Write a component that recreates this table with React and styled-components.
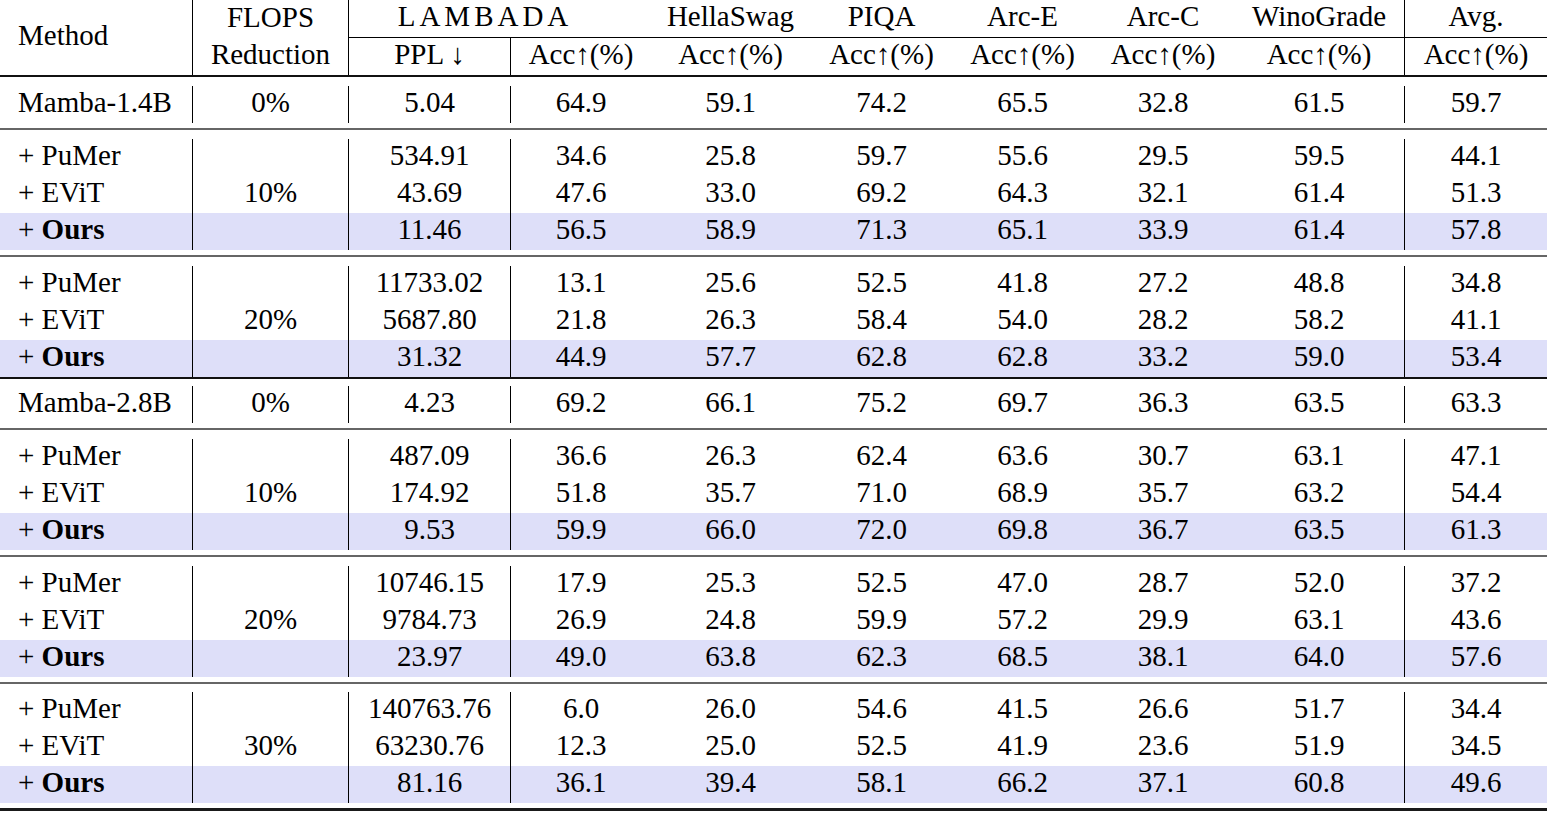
import React from "react";
import styled, { createGlobalStyle } from "styled-components";

const GlobalStyle = createGlobalStyle`
  html, body {
    margin: 0;
    padding: 0;
    background: #ffffff;
  }
  body {
    font-family: "Liberation Serif", "Times New Roman", serif;
    color: #000;
  }
`;

// fixed column widths, taken from the layout of the table
const COLS = "192px 156px 162px 141px 159px 143px 139px 142px 170px 143px";
// columns that carry a vertical rule on their left edge
const RULED = [1, 2, 3, 9];

const Table = styled.div`
  width: 1547px;
  font-size: 29px;
`;

const Header = styled.div`
  display: grid;
  grid-template-columns: ${COLS};
  grid-template-rows: 38px 37px;
  border-bottom: 2px solid #111;
`;

const HeadCell = styled.div`
  grid-column: ${(p) => p.$col};
  grid-row: ${(p) => p.$row};
  box-sizing: border-box;
  display: flex;
  align-items: center;
  justify-content: ${(p) => (p.$left ? "flex-start" : "center")};
  padding: 0 ${(p) => p.$shift || 0}px 4px ${(p) => (p.$left ? 18 : 0)}px;
  line-height: 33px;
  letter-spacing: ${(p) => p.$spread || 0}px;
  white-space: nowrap;
  border-left: ${(p) => (p.$rule ? "1px solid #000" : "none")};
  border-bottom: ${(p) => (p.$underline ? "1px solid #000" : "none")};
`;

const Group = styled.div`
  padding: ${(p) => p.$top}px 0 ${(p) => p.$bottom}px;
  border-bottom: ${(p) => p.$rule};
`;

const Row = styled.div`
  display: grid;
  grid-template-columns: ${COLS};
  height: 37px;
  background: ${(p) => (p.$ours ? "#dedff9" : "transparent")};
`;

const Cell = styled.div`
  box-sizing: border-box;
  display: flex;
  align-items: center;
  justify-content: ${(p) => (p.$left ? "flex-start" : "center")};
  padding: 0 0 4px ${(p) => (p.$left ? 18 : 0)}px;
  line-height: 33px;
  white-space: nowrap;
  border-left: ${(p) => (p.$rule ? "1px solid #000" : "none")};
`;

const Strong = styled.span`
  font-weight: 700;
`;

const LIGHT = "2px solid #666";
const HEAVY = "2px solid #111";
const BOTTOM = "3px solid #1a1a1a";

const benches = ["HellaSwag", "PIQA", "Arc-E", "Arc-C", "WinoGrade"];

const groups = [
  {
    top: 9, bottom: 5, rule: LIGHT,
    rows: [["Mamba-1.4B", "0%", "5.04", "64.9", "59.1", "74.2", "65.5", "32.8", "61.5", "59.7"]],
  },
  {
    top: 9, bottom: 5, rule: LIGHT, flops: "10%",
    rows: [
      ["+ PuMer", "534.91", "34.6", "25.8", "59.7", "55.6", "29.5", "59.5", "44.1"],
      ["+ EViT", "43.69", "47.6", "33.0", "69.2", "64.3", "32.1", "61.4", "51.3"],
      ["Ours", "11.46", "56.5", "58.9", "71.3", "65.1", "33.9", "61.4", "57.8"],
    ],
  },
  {
    top: 9, bottom: 0, rule: HEAVY, flops: "20%",
    rows: [
      ["+ PuMer", "11733.02", "13.1", "25.6", "52.5", "41.8", "27.2", "48.8", "34.8"],
      ["+ EViT", "5687.80", "21.8", "26.3", "58.4", "54.0", "28.2", "58.2", "41.1"],
      ["Ours", "31.32", "44.9", "57.7", "62.8", "62.8", "33.2", "59.0", "53.4"],
    ],
  },
  {
    top: 7, bottom: 5, rule: LIGHT,
    rows: [["Mamba-2.8B", "0%", "4.23", "69.2", "66.1", "75.2", "69.7", "36.3", "63.5", "63.3"]],
  },
  {
    top: 9, bottom: 5, rule: LIGHT, flops: "10%",
    rows: [
      ["+ PuMer", "487.09", "36.6", "26.3", "62.4", "63.6", "30.7", "63.1", "47.1"],
      ["+ EViT", "174.92", "51.8", "35.7", "71.0", "68.9", "35.7", "63.2", "54.4"],
      ["Ours", "9.53", "59.9", "66.0", "72.0", "69.8", "36.7", "63.5", "61.3"],
    ],
  },
  {
    top: 9, bottom: 5, rule: LIGHT, flops: "20%",
    rows: [
      ["+ PuMer", "10746.15", "17.9", "25.3", "52.5", "47.0", "28.7", "52.0", "37.2"],
      ["+ EViT", "9784.73", "26.9", "24.8", "59.9", "57.2", "29.9", "63.1", "43.6"],
      ["Ours", "23.97", "49.0", "63.8", "62.3", "68.5", "38.1", "64.0", "57.6"],
    ],
  },
  {
    top: 8, bottom: 5, rule: BOTTOM, flops: "30%",
    rows: [
      ["+ PuMer", "140763.76", "6.0", "26.0", "54.6", "41.5", "26.6", "51.7", "34.4"],
      ["+ EViT", "63230.76", "12.3", "25.0", "52.5", "41.9", "23.6", "51.9", "34.5"],
      ["Ours", "81.16", "36.1", "39.4", "58.1", "66.2", "37.1", "60.8", "49.6"],
    ],
  },
];

// turn a group row into the ten cells of the table
const toCells = (row, index, flops) => {
  if (!flops) return row;
  const [method, ...rest] = row;
  return [method, index === 1 ? flops : "", ...rest];
};

const TableHeader = () => (
  <Header>
    <HeadCell $col="1" $row="1 / 3" $left>Method</HeadCell>
    <HeadCell $col="2" $row="1" $rule>FLOPS</HeadCell>
    <HeadCell $col="2" $row="2" $rule>Reduction</HeadCell>
    <HeadCell $col="3 / 5" $row="1" $rule $underline $spread={4} $shift={30}>
      LAMBADA
    </HeadCell>
    {benches.map((name, i) => (
      <HeadCell key={name} $col={`${i + 5}`} $row="1" $underline>
        {name}
      </HeadCell>
    ))}
    <HeadCell $col="10" $row="1" $rule $underline>Avg.</HeadCell>
    <HeadCell $col="3" $row="2" $rule>PPL ↓</HeadCell>
    {Array.from({ length: 7 }).map((_, i) => (
      <HeadCell key={i} $col={`${i + 4}`} $row="2" $rule={i + 3 === 3 || i + 3 === 9}>
        Acc↑(%)
      </HeadCell>
    ))}
  </Header>
);

export default function App() {
  return (
    <>
      <GlobalStyle />
      <Table>
        <TableHeader />
        {groups.map((group, g) => (
          <Group key={g} $top={group.top} $bottom={group.bottom} $rule={group.rule}>
            {group.rows.map((row, r) => {
              const ours = row[0] === "Ours";
              const cells = toCells(row, r, group.flops);
              return (
                <Row key={r} $ours={ours}>
                  {cells.map((value, c) => (
                    <Cell key={c} $left={c === 0} $rule={RULED.includes(c)}>
                      {c === 0 && ours ? (
                        <>
                          +&nbsp;<Strong>Ours</Strong>
                        </>
                      ) : (
                        value
                      )}
                    </Cell>
                  ))}
                </Row>
              );
            })}
          </Group>
        ))}
      </Table>
    </>
  );
}
